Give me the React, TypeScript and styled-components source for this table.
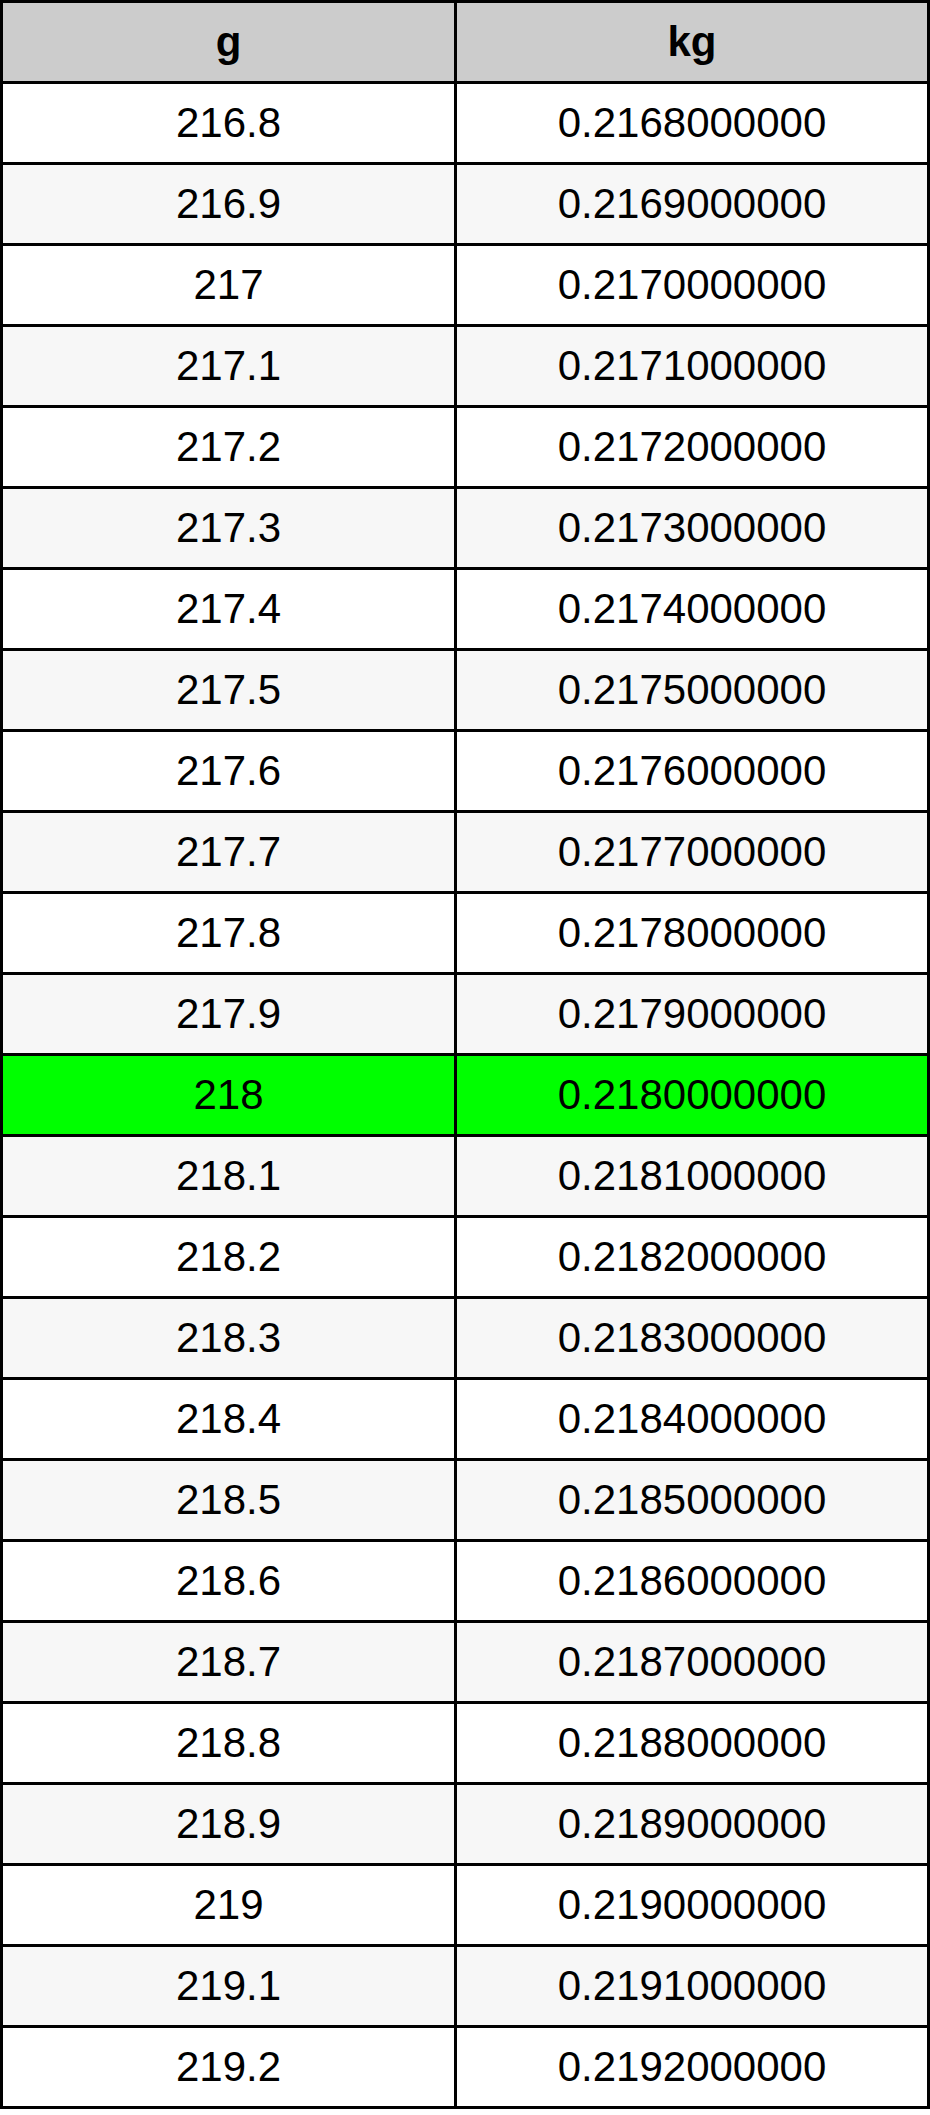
import React from "react";
import styled, { createGlobalStyle } from "styled-components";

const GlobalStyle = createGlobalStyle`
  html, body {
    margin: 0;
    padding: 0;
    background: #ffffff;
  }
  * {
    box-sizing: border-box;
  }
`;

const Table = styled.div`
  display: grid;
  grid-template-columns: 451px 470px;
  grid-auto-rows: 78px;
  gap: 3px;
  padding: 3px;
  width: 930px;
  background: #000000;
  font-family: "Liberation Sans", Arial, Helvetica, sans-serif;
  font-size: 42px;
  color: #000000;
`;

type Tone = "head" | "plain" | "alt" | "hit";

const toneColor: Record<Tone, string> = {
  head: "#cccccc",
  plain: "#ffffff",
  alt: "#f7f7f7",
  hit: "#00ff00",
};

const Cell = styled.div<{ $tone: Tone }>`
  display: flex;
  align-items: center;
  justify-content: center;
  background: ${(p) => toneColor[p.$tone]};
  font-weight: ${(p) => (p.$tone === "head" ? 700 : 400)};
  line-height: normal;
  white-space: nowrap;
`;

const grams = [
  "216.8", "216.9", "217", "217.1", "217.2", "217.3", "217.4", "217.5",
  "217.6", "217.7", "217.8", "217.9", "218", "218.1", "218.2", "218.3",
  "218.4", "218.5", "218.6", "218.7", "218.8", "218.9", "219", "219.1", "219.2",
];

const toKg = (g: string) => (parseFloat(g) / 1000).toFixed(10);

export default function App() {
  return (
    <>
      <GlobalStyle />
      <Table>
        <Cell $tone="head">g</Cell>
        <Cell $tone="head">kg</Cell>
        {grams.map((g, i) => {
          const tone: Tone = g === "218" ? "hit" : i % 2 === 1 ? "alt" : "plain";
          return (
            <React.Fragment key={g}>
              <Cell $tone={tone}>{g}</Cell>
              <Cell $tone={tone}>{toKg(g)}</Cell>
            </React.Fragment>
          );
        })}
      </Table>
    </>
  );
}
